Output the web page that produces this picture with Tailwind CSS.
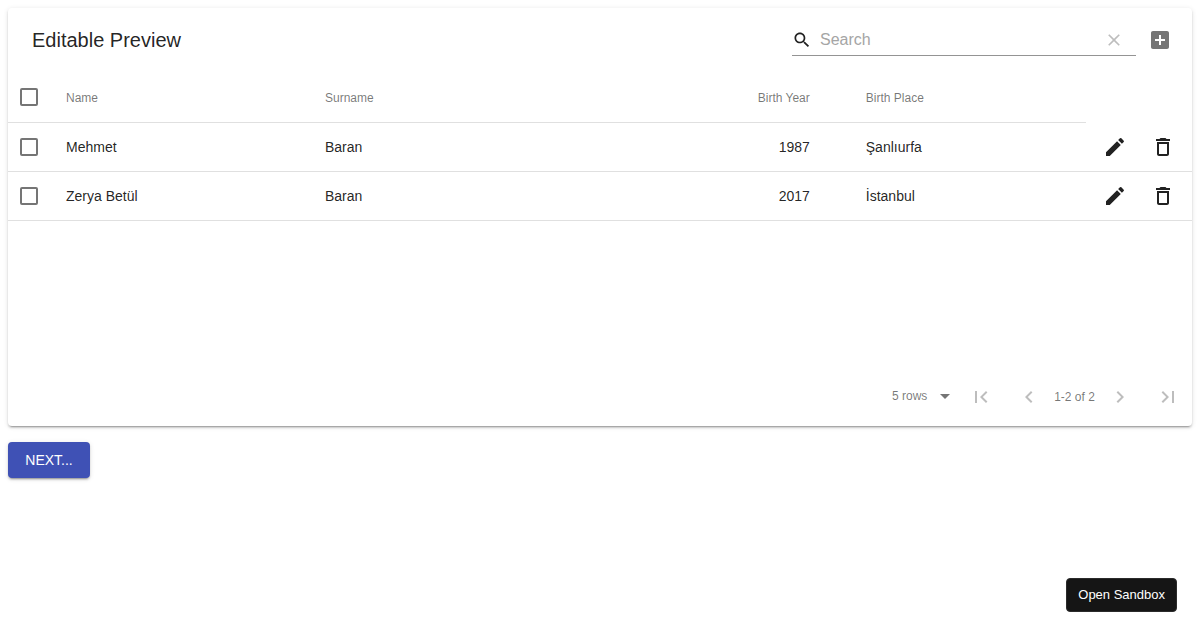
<!DOCTYPE html>
<html lang="en">
<head>
<meta charset="utf-8">
<meta name="viewport" content="width=device-width, initial-scale=1">
<title>Editable Preview</title>
<script src="https://cdn.jsdelivr.net/npm/@tailwindcss/browser@4"></script>
</head>
<body class="bg-white p-2 font-['Helvetica','Liberation_Sans',sans-serif] text-sm text-black/87">
<svg class="hidden" aria-hidden="true">
  <symbol id="edit" viewBox="0 0 24 24"><path d="M3 17.25V21h3.75L17.81 9.94l-3.75-3.75L3 17.25zM20.71 7.04c.39-.39.39-1.02 0-1.41l-2.34-2.34a.9959.9959 0 0 0-1.41 0l-1.83 1.83 3.75 3.75 1.83-1.83z"/></symbol>
  <symbol id="delete" viewBox="0 0 24 24"><path d="M6 19c0 1.1.9 2 2 2h8c1.1 0 2-.9 2-2V7H6v12zM8 9h8v10H8V9zm7.5-5l-1-1h-5l-1 1H5v2h14V4h-3.5z"/></symbol>
</svg>
<main>
  <section class="rounded bg-white shadow-[0_3px_1px_-2px_rgba(0,0,0,0.2),0_2px_2px_0_rgba(0,0,0,0.14),0_1px_5px_0_rgba(0,0,0,0.12)]">
    <header class="flex h-16 items-center pr-5 pl-6">
      <h1 class="flex-1 text-xl">Editable Preview</h1>
      <div class="flex h-8 w-[344px] items-center border-b border-[#949494]">
        <svg class="size-5 fill-[#212121]" viewBox="0 0 24 24" aria-hidden="true"><path d="M15.5 14h-.79l-.28-.27C15.41 12.59 16 11.11 16 9.5 16 5.91 13.09 3 9.5 3S3 5.91 3 9.5 5.91 16 9.5 16c1.61 0 3.09-.59 4.23-1.57l.27.28v.79l5 4.99L20.49 19l-4.99-5zm-6 0C7.01 14 5 11.99 5 9.5S7.01 5 9.5 5 14 7.01 14 9.5 11.99 14 9.5 14z"/></svg>
        <input type="text" placeholder="Search" aria-label="Search" class="ml-2 min-w-0 flex-1 text-base outline-none placeholder:text-[#a5a5a5]">
        <button type="button" disabled aria-label="Clear search" class="mr-3"><svg class="size-5 fill-black/26" viewBox="0 0 24 24"><path d="M19 6.41L17.59 5 12 10.59 6.41 5 5 6.41 10.59 12 5 17.59 6.41 19 12 13.41 17.59 19 19 17.59 13.41 12z"/></svg></button>
      </div>
      <button type="button" aria-label="Add" class="ml-3"><svg class="size-6 fill-[#757575]" viewBox="0 0 24 24"><path d="M19 3H5c-1.11 0-2 .9-2 2v14c0 1.1.89 2 2 2h14c1.1 0 2-.9 2-2V5c0-1.1-.9-2-2-2zm-2 10h-4v4h-2v-4H7v-2h4V7h2v4h4v2z"/></svg></button>
    </header>

    <div class="min-h-[296px]">
      <table class="w-full table-fixed border-separate border-spacing-0">
        <colgroup>
          <col class="w-[42px]">
          <col class="w-[21.875%]">
          <col class="w-[21.875%]">
          <col class="w-[23.8%]">
          <col>
          <col class="w-[106px]">
        </colgroup>
        <thead>
          <tr class="h-[51px] text-left text-xs text-black/54 *:font-normal">
            <th class="border-b border-[#e0e0e0] pl-3"><input type="checkbox" aria-label="Select all" class="block size-[18px] appearance-none rounded-xs border-2 border-[#757575]"></th>
            <th class="border-b border-[#e0e0e0] px-4 pt-0.5">Name</th>
            <th class="border-b border-[#e0e0e0] px-4 pt-0.5">Surname</th>
            <th class="border-b border-[#e0e0e0] pt-0.5 pr-10 text-right">Birth Year</th>
            <th class="border-b border-[#e0e0e0] px-4 pt-0.5">Birth Place</th>
            <td></td>
          </tr>
        </thead>
        <tbody>
          <tr class="h-[49px] *:border-b *:border-[#e0e0e0]">
            <td class="pl-3"><input type="checkbox" aria-label="Select Mehmet Baran" class="block size-[18px] appearance-none rounded-xs border-2 border-[#757575]"></td>
            <td class="px-4">Mehmet</td>
            <td class="px-4">Baran</td>
            <td class="pr-10 text-right">1987</td>
            <td class="px-4">Şanlıurfa</td>
            <td><div class="flex justify-end gap-6 pr-[17px]">
              <button type="button" aria-label="Edit Mehmet"><svg class="size-6 fill-[#212121]"><use href="#edit"/></svg></button>
              <button type="button" aria-label="Delete Mehmet"><svg class="size-6 fill-[#212121]"><use href="#delete"/></svg></button>
            </div></td>
          </tr>
          <tr class="h-[49px] *:border-b *:border-[#e0e0e0]">
            <td class="pl-3"><input type="checkbox" aria-label="Select Zerya Betül Baran" class="block size-[18px] appearance-none rounded-xs border-2 border-[#757575]"></td>
            <td class="px-4">Zerya Betül</td>
            <td class="px-4">Baran</td>
            <td class="pr-10 text-right">2017</td>
            <td class="px-4">İstanbul</td>
            <td><div class="flex justify-end gap-6 pr-[17px]">
              <button type="button" aria-label="Edit Zerya Betül"><svg class="size-6 fill-[#212121]"><use href="#edit"/></svg></button>
              <button type="button" aria-label="Delete Zerya Betül"><svg class="size-6 fill-[#212121]"><use href="#delete"/></svg></button>
            </div></td>
          </tr>
        </tbody>
      </table>
    </div>

    <footer class="flex h-[58px] items-center justify-end text-xs text-black/54">
      <div class="relative mb-0.5">
        <select aria-label="Rows per page" class="block h-6 appearance-none pr-[29px] outline-none">
          <option>5 rows</option>
        </select>
        <svg class="pointer-events-none absolute top-0 right-0 size-6 fill-[#757575]" viewBox="0 0 24 24" aria-hidden="true"><path d="M7 10l5 5 5-5z"/></svg>
      </div>
      <button type="button" disabled aria-label="First page" class="p-3"><svg class="size-6 fill-black/26" viewBox="0 0 24 24"><path d="M18.41 16.59L13.82 12l4.59-4.59L17 6l-6 6 6 6zM6 6h2v12H6z"/></svg></button>
      <button type="button" disabled aria-label="Previous page" class="p-3"><svg class="size-6 fill-black/26" viewBox="0 0 24 24"><path d="M15.41 7.41L14 6l-6 6 6 6 1.41-1.41L10.83 12z"/></svg></button>
      <span class="min-w-[43px] text-center">1-2 of 2</span>
      <button type="button" disabled aria-label="Next page" class="p-3"><svg class="size-6 fill-black/26" viewBox="0 0 24 24"><path d="M10 6L8.59 7.41 13.17 12l-4.58 4.59L10 18l6-6z"/></svg></button>
      <button type="button" disabled aria-label="Last page" class="p-3"><svg class="size-6 fill-black/26" viewBox="0 0 24 24"><path d="M5.59 7.41L10.18 12l-4.59 4.59L7 18l6-6-6-6zM16 6h2v12h-2z"/></svg></button>
    </footer>
  </section>

  <button type="button" class="mt-4 h-9 min-w-[82px] rounded bg-[#3f51b5] px-4 text-white shadow-[0_3px_1px_-2px_rgba(0,0,0,0.2),0_2px_2px_0_rgba(0,0,0,0.14),0_1px_5px_0_rgba(0,0,0,0.12)]">NEXT...</button>
</main>
<button type="button" class="fixed right-[23px] bottom-[18px] h-[34px] rounded border border-[#2b2b2b] bg-[#151515] px-[11px] text-[13px] text-white">Open Sandbox</button>
</body>
</html>
